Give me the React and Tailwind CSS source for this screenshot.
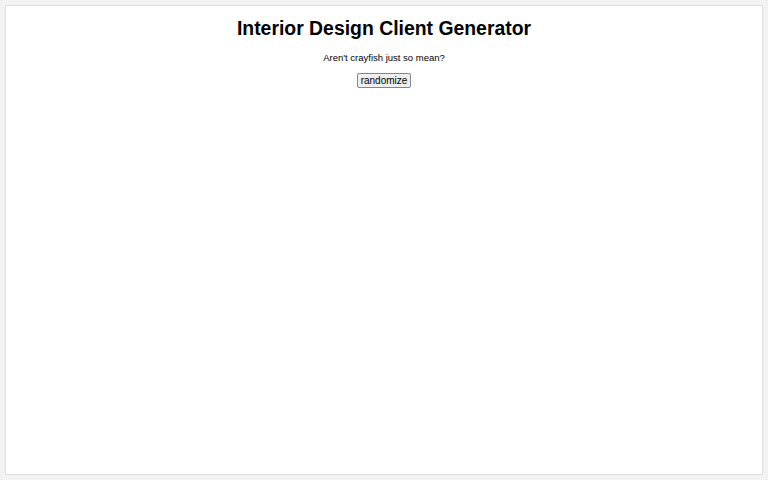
export default function App() {
  return (
    <div className="h-[480px] w-[768px] bg-[#f2f2f2] p-[5px] font-['Liberation_Sans',Arial,sans-serif]">
      <div className="flex h-full flex-col items-center border border-[#dcdcdc] bg-white">
        <h1 className="mt-[10px] text-[19.4px] font-bold leading-[24px] text-black">
          Interior Design Client Generator
        </h1>
        <p className="mt-[11px] text-[9.5px] leading-[13px] text-black">Aren't crayfish just so mean?</p>
        <button className="mt-[9px] h-[15px] rounded-[2px] border border-[#858585] bg-[#efefef] px-[3px] text-[10px] leading-[12px] text-black">
          randomize
        </button>
      </div>
    </div>
  );
}
